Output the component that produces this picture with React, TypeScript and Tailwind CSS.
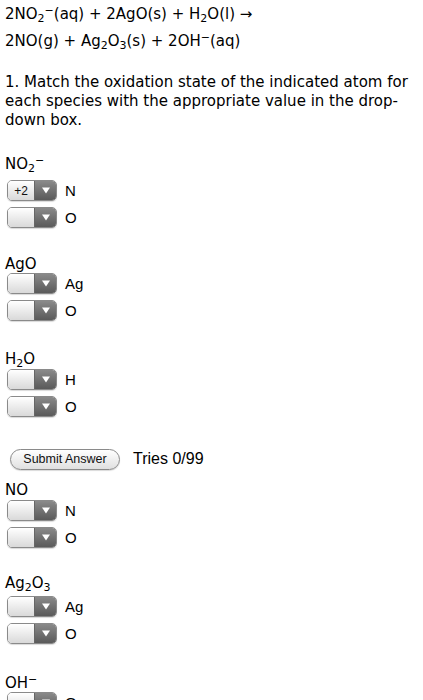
import type { ReactNode } from "react";

type Atom = { atom: string; value?: string };

type Species = {
  name: ReactNode;
  atoms: Atom[];
  labelGap: string;
  rowGap: string;
};

const sub = (n: string) => <sub className="text-[11px]">{n}</sub>;
const minus = <sup className="text-[11px]">−</sup>;

const firstGroup: Species[] = [
  { name: <>NO{sub("2")}{minus}</>, atoms: [{ atom: "N", value: "+2" }, { atom: "O" }], labelGap: "mt-[25px]", rowGap: "mt-[7px]" },
  { name: <>AgO</>, atoms: [{ atom: "Ag" }, { atom: "O" }], labelGap: "mt-[27px]", rowGap: "mt-0" },
  { name: <>H{sub("2")}O</>, atoms: [{ atom: "H" }, { atom: "O" }], labelGap: "mt-[29px]", rowGap: "mt-[1px]" },
];

const secondGroup: Species[] = [
  { name: <>NO</>, atoms: [{ atom: "N" }, { atom: "O" }], labelGap: "mt-[10px]", rowGap: "mt-[1px]" },
  { name: <>Ag{sub("2")}O{sub("3")}</>, atoms: [{ atom: "Ag" }, { atom: "O" }], labelGap: "mt-[26px]", rowGap: "mt-[4px]" },
  { name: <>OH{minus}</>, atoms: [{ atom: "O" }], labelGap: "mt-[30px]", rowGap: "mt-0" },
];

function DropDown({ value }: { value?: string }) {
  return (
    <div className="flex h-[21px] w-[50px] overflow-hidden rounded-[5px] border border-[#8a8a8a] shadow-[0_1px_1px_rgba(0,0,0,0.15)]">
      <div className="flex flex-1 items-center justify-center bg-gradient-to-b from-white to-[#d9d9d9] font-['Liberation_Sans',Arial,sans-serif] text-[12px] text-[#111]">
        {value}
      </div>
      <div className="flex w-[22px] items-center justify-center border-l border-[#666] bg-gradient-to-b from-[#8a8a8a] to-[#5a5a5a]">
        <svg width="8" height="7" viewBox="0 0 8 7">
          <path d="M0 0.5 L8 0.5 L4 6.5 Z" fill="#fff" />
        </svg>
      </div>
    </div>
  );
}

function SpeciesBlock({ name, atoms, labelGap, rowGap }: Species) {
  return (
    <div className={labelGap}>
      <div className="h-[18px] pl-[5px] text-[15px] leading-[18px]">{name}</div>
      <div className={`${rowGap} flex flex-col gap-[6px] pl-[7px]`}>
        {atoms.map((a) => (
          <div key={a.atom} className="flex items-center gap-[8px]">
            <DropDown value={a.value} />
            <span className="font-['Liberation_Sans',Arial,sans-serif] text-[15px] leading-[21px]">{a.atom}</span>
          </div>
        ))}
      </div>
    </div>
  );
}

export default function App() {
  return (
    <div className="h-[700px] overflow-hidden bg-white font-['DejaVu_Sans',Verdana,sans-serif] text-black">
      <div className="px-[5px] pt-[4px] text-[15px] leading-[20px]">
        <p>
          2NO{sub("2")}{minus}(aq) + 2AgO(s) + H{sub("2")}O(l) →
        </p>
        <p className="mt-[7px]">
          2NO(g) + Ag{sub("2")}O{sub("3")}(s) + 2OH{minus}(aq)
        </p>
        <p className="mt-[22px] leading-[19px]">
          1. Match the oxidation state of the indicated atom for each species with the appropriate value in the drop-down box.
        </p>
      </div>

      {firstGroup.map((s, i) => (
        <SpeciesBlock key={i} {...s} />
      ))}

      <div className="mt-[30px] flex items-center gap-[13px] pl-[10px]">
        <button className="h-[21px] w-[110px] rounded-full border border-[#8a8a8a] bg-gradient-to-b from-white to-[#e0e0e0] font-['Liberation_Sans',Arial,sans-serif] text-[12.5px] text-[#111] shadow-[0_1px_1px_rgba(0,0,0,0.15)]">
          Submit Answer
        </button>
        <span className="font-['Liberation_Sans',Arial,sans-serif] text-[16px]">Tries 0/99</span>
      </div>

      {secondGroup.map((s, i) => (
        <SpeciesBlock key={i} {...s} />
      ))}
    </div>
  );
}
